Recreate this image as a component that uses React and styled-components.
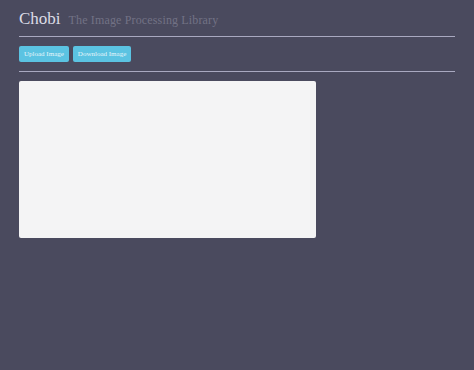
import React from "react";
import styled, { createGlobalStyle } from "styled-components";

const GlobalStyle = createGlobalStyle`
  html, body {
    margin: 0;
    padding: 0;
    background: #4a4a5e;
  }
  body {
    font-family: "Liberation Serif", serif;
  }
`;

const Page = styled.div`
  min-height: 370px;
  padding: 8px 19px 0 19px;
  box-sizing: border-box;
  background: #4a4a5e;
`;

const Header = styled.header`
  display: flex;
  align-items: baseline;
  gap: 8px;
  height: 28px;
`;

const Title = styled.h1`
  margin: 0;
  font-family: "Liberation Serif", serif;
  font-weight: normal;
  font-size: 17px;
  line-height: 22px;
  color: #dcdce6;
`;

const Subtitle = styled.span`
  font-family: "Liberation Serif", serif;
  font-size: 12px;
  letter-spacing: 0.15px;
  color: #727285;
`;

const Rule = styled.hr`
  margin: 0;
  border: none;
  height: 1px;
  background: #a9a9c0;
`;

const Toolbar = styled.div`
  display: flex;
  gap: 4px;
  padding: 9px 0 9px;
`;

const Button = styled.button`
  height: 16px;
  padding: 0 5px;
  border: none;
  border-radius: 2px;
  background: #5bc3e2;
  color: #e6f6fb;
  font-family: "Liberation Serif", serif;
  font-size: 7px;
  cursor: pointer;
`;

const Canvas = styled.div`
  margin-top: 9px;
  width: 297px;
  height: 157px;
  border-radius: 2px;
  background: #f4f4f5;
`;

export default function App() {
  return (
    <>
      <GlobalStyle />
      <Page>
        <Header>
          <Title>Chobi</Title>
          <Subtitle>The Image Processing Library</Subtitle>
        </Header>
        <Rule />
        <Toolbar>
          <Button>Upload Image</Button>
          <Button>Download Image</Button>
        </Toolbar>
        <Rule />
        <Canvas />
      </Page>
    </>
  );
}
